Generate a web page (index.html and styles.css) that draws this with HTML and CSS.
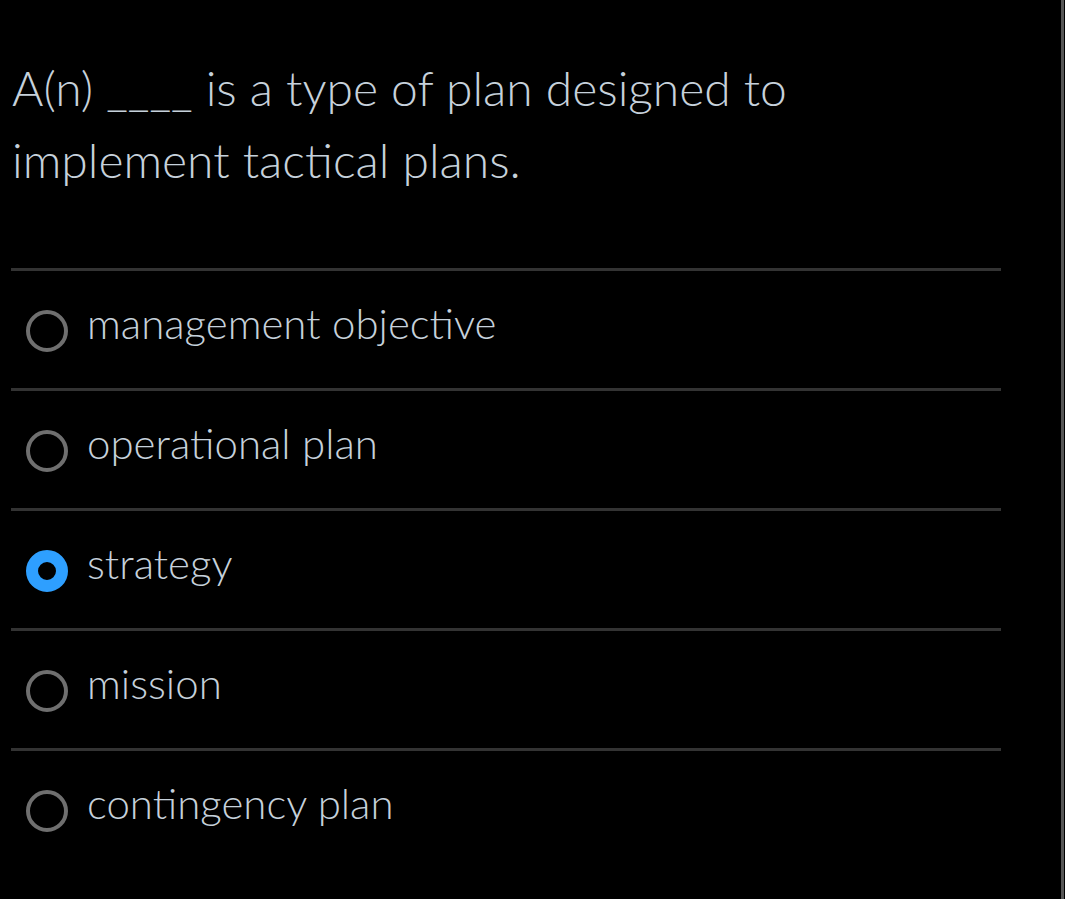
FILE: index.html
```html
<!DOCTYPE html>
<html lang="en">
<head>
	<meta charset="UTF-8">
	<title>Question</title>
	<link rel="stylesheet" href="styles.css">
</head>
<body>
	<div class="page">
		<div class="question">
			<p>A(n) ____ is a type of plan designed to implement tactical plans.</p>
		</div>
		<ul class="answers">
			<li class="answer">
				<span class="radio"></span>
				<span class="label">management objective</span>
			</li>
			<li class="answer">
				<span class="radio"></span>
				<span class="label">operational plan</span>
			</li>
			<li class="answer">
				<span class="radio checked"></span>
				<span class="label">strategy</span>
			</li>
			<li class="answer">
				<span class="radio"></span>
				<span class="label">mission</span>
			</li>
			<li class="answer">
				<span class="radio"></span>
				<span class="label">contingency plan</span>
			</li>
		</ul>
	</div>
</body>
</html>
```

FILE: styles.css
```css
html,body {
	margin:0;
	padding:0;
	background:#000;
	height:100%;
	overflow:hidden;
}

body {
	font-family:"Lato Light","Lato","Open Sans",sans-serif;
	font-weight:300;
	color:#c6d1db;
}

.page {
	width:1061px;
	height:100%;
	border-right:3px solid #565656;
	box-sizing:content-box;
}

.question {
	padding:52px 0 0 12px;
	width:800px;
}

.question p {
	margin:0;
	font-size:48px;
	line-height:72px;
}

.answers {
	list-style:none;
	margin:72px 0 0 11px;
	padding:0;
	width:990px;
}

.answer {
	display:flex;
	align-items:center;
	gap:19px;
	height:117px;
	padding-left:15px;
	border-top:3px solid #333;
	box-sizing:content-box;
}

.radio {
	width:34px;
	height:34px;
	border:4px solid #6f6f6f;
	border-radius:50%;
	flex:none;
	margin-top:3px;
}

.radio.checked {
	width:18px;
	height:18px;
	border:12px solid #2e9fff;
}

.label {
	font-size:42px;
	line-height:1;
	margin-bottom:14px;
}
```
